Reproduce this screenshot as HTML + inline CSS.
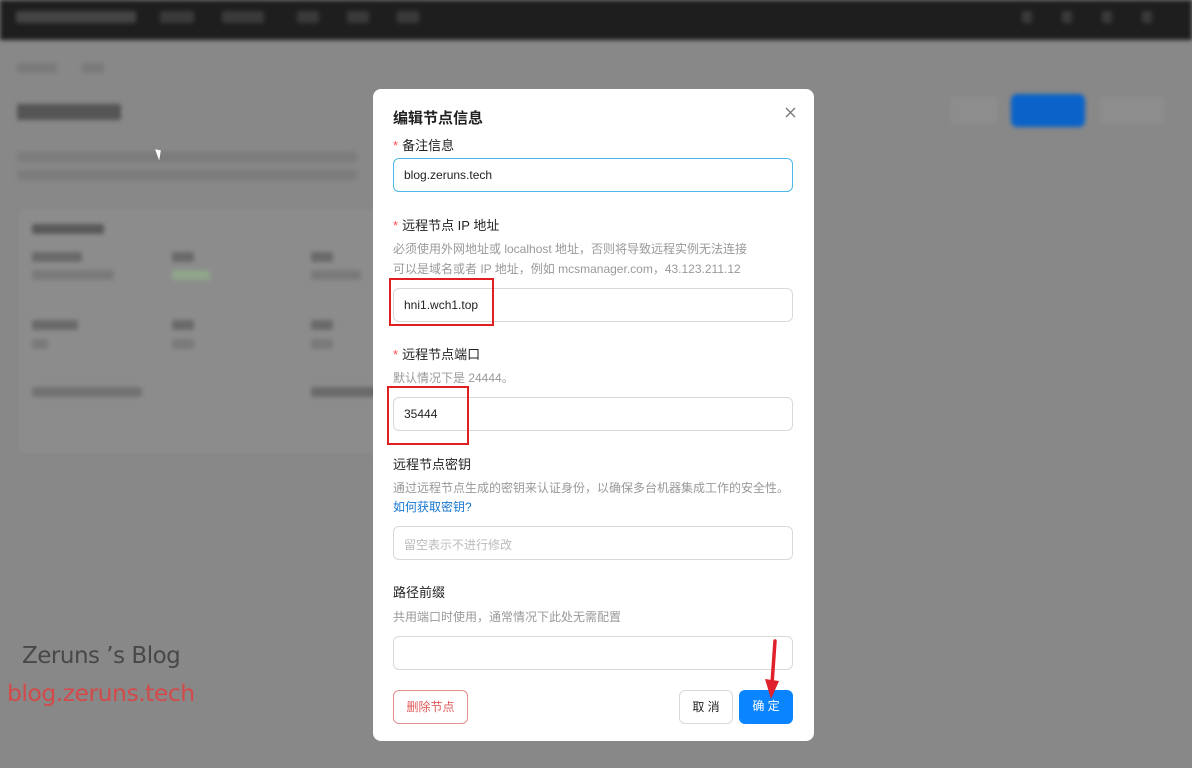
<!DOCTYPE html>
<html><head><meta charset="utf-8"><style>
*{box-sizing:border-box;margin:0;padding:0}
body{width:1192px;height:768px;overflow:hidden;background:#888;font-family:"Liberation Sans","Noto Sans CJK SC",sans-serif;position:relative}
.bg{position:absolute;inset:0;filter:blur(2px)}
.hdr{position:absolute;left:0;top:0;width:1192px;height:40px;background:#1e1e1e}
.hdr span{position:absolute;top:11px;height:12px;background:#3a3a3a;border-radius:2px}
.b{position:absolute;background:#6e6e6e;height:10px;border-radius:2px}
.card{position:absolute;left:17px;top:208px;width:390px;height:247px;background:#8c8c8c;border:1px solid #858585;border-radius:6px}
.modal{position:absolute;left:373px;top:89px;width:441px;height:652px;background:#fff;border-radius:8px;color:#222}
.t{position:absolute;left:20px;font-size:13px;color:#222}
.t i{color:#ff4d4f;font-style:normal;margin-right:4px}
.h{position:absolute;left:20px;font-size:12px;color:#999}
.in{position:absolute;left:20px;width:400px;height:34px;border:1px solid #d9d9d9;border-radius:6px;font-size:12px;padding:9px 10px;color:#222}
.red{position:absolute;border:2px solid #e02020}
.btn{position:absolute;height:34px;border-radius:6px;font-size:12px;text-align:center;line-height:32px}
</style></head><body>
<div class="bg">
<div class="hdr">
<span style="left:16px;width:120px;background:#444"></span>
<span style="left:160px;width:34px"></span><span style="left:222px;width:42px"></span>
<span style="left:297px;width:22px"></span><span style="left:347px;width:22px"></span><span style="left:397px;width:22px"></span>
<span style="left:1022px;width:10px"></span><span style="left:1062px;width:10px"></span><span style="left:1102px;width:10px"></span><span style="left:1142px;width:10px"></span>
</div>
<div class="b" style="left:17px;top:63px;width:40px;background:#7a7a7a"></div>
<div class="b" style="left:82px;top:63px;width:22px;background:#7a7a7a"></div>
<div class="b" style="left:17px;top:104px;width:104px;height:16px;background:#555"></div>
<div class="b" style="left:17px;top:152px;width:340px;background:#7c7c7c"></div>
<div class="b" style="left:17px;top:170px;width:340px;background:#7c7c7c"></div>
<div class="card">
<div class="b" style="left:14px;top:15px;width:72px;background:#5a5a5a"></div>
<div class="b" style="left:14px;top:43px;width:50px;background:#6a6a6a"></div>
<div class="b" style="left:14px;top:61px;width:82px;background:#7a7a7a"></div>
<div class="b" style="left:154px;top:43px;width:22px;background:#6a6a6a"></div>
<div class="b" style="left:154px;top:61px;width:38px;background:#8fa58a"></div>
<div class="b" style="left:293px;top:43px;width:22px;background:#6a6a6a"></div>
<div class="b" style="left:293px;top:61px;width:50px;background:#7a7a7a"></div>
<div class="b" style="left:14px;top:111px;width:46px;background:#6a6a6a"></div>
<div class="b" style="left:14px;top:130px;width:16px;background:#7a7a7a"></div>
<div class="b" style="left:154px;top:111px;width:22px;background:#6a6a6a"></div>
<div class="b" style="left:154px;top:130px;width:22px;background:#7a7a7a"></div>
<div class="b" style="left:293px;top:111px;width:22px;background:#6a6a6a"></div>
<div class="b" style="left:293px;top:130px;width:22px;background:#7a7a7a"></div>
<div class="b" style="left:14px;top:178px;width:110px;background:#727272"></div>
<div class="b" style="left:293px;top:178px;width:80px;background:#6a6a6a"></div>
</div>
<div class="btn" style="left:948px;top:95px;width:52px;height:30px;background:#8d8d8d;border:1px solid #858585"></div>
<div class="btn" style="left:1011px;top:94px;width:74px;height:33px;background:#0a63c9"></div>
<div class="btn" style="left:1098px;top:95px;width:68px;height:30px;background:#8d8d8d;border:1px solid #858585"></div>
</div>
<div style="position:absolute;left:157px;top:148px;width:0;height:0;border-left:5px solid #fff;border-top:3px solid transparent;border-bottom:9px solid transparent;transform:rotate(-20deg)"></div>
<div style="position:absolute;left:22px;top:643px;font-size:23px;color:#484848;font-family:'DejaVu Sans',sans-serif;letter-spacing:-0.5px">Zeruns ’s Blog</div>
<div style="position:absolute;left:7px;top:679px;font-size:23.5px;color:#d34a4a;font-family:'DejaVu Sans',sans-serif;letter-spacing:-0.5px">blog.zeruns.tech</div>

<div class="modal">
<div style="position:absolute;left:20px;top:18px;font-size:15px;font-weight:bold">编辑节点信息</div>
<svg style="position:absolute;left:412px;top:18px" width="11" height="11"><path d="M1 1L10 10M10 1L1 10" stroke="#777" stroke-width="1.3"/></svg>
<div class="t" style="top:46px"><i>*</i>备注信息</div>
<div class="in" style="top:69px;border-color:#4fb8e6">blog.zeruns.tech</div>
<div class="t" style="top:126px"><i>*</i>远程节点 IP 地址</div>
<div class="h" style="top:151px">必须使用外网地址或 localhost 地址，否则将导致远程实例无法连接</div>
<div class="h" style="top:171px">可以是域名或者 IP 地址，例如 mcsmanager.com，43.123.211.12</div>
<div class="in" style="top:199px">hni1.wch1.top</div>
<div class="red" style="left:16px;top:189px;width:105px;height:48px"></div>
<div class="t" style="top:255px"><i>*</i>远程节点端口</div>
<div class="h" style="top:280px">默认情况下是 24444。</div>
<div class="in" style="top:308px">35444</div>
<div class="red" style="left:14px;top:297px;width:82px;height:59px"></div>
<div class="t" style="top:365px">远程节点密钥</div>
<div class="h" style="top:390px">通过远程节点生成的密钥来认证身份，以确保多台机器集成工作的安全性。</div>
<div class="t" style="top:409px;color:#1677d2;font-size:12px">如何获取密钥?</div>
<div class="in" style="top:437px;color:#bbb">留空表示不进行修改</div>
<div class="t" style="top:493px">路径前缀</div>
<div class="h" style="top:519px">共用端口时使用，通常情况下此处无需配置</div>
<div class="in" style="top:547px"></div>
<div class="btn" style="left:20px;top:601px;width:75px;border:1px solid #e58e8e;color:#e05a5a">删除节点</div>
<div class="btn" style="left:306px;top:601px;width:54px;border:1px solid #d9d9d9;color:#222">取 消</div>
<div class="btn" style="left:366px;top:601px;width:54px;background:#0a84ff;color:#fff">确 定</div>
<svg style="position:absolute;left:390px;top:550px" width="20" height="62"><line x1="12" y1="2" x2="9" y2="45" stroke="#e0202a" stroke-width="3.5" stroke-linecap="round"/><polygon points="2,40 16,42 8,60" fill="#e0202a"/></svg>
</div>
</body></html>
